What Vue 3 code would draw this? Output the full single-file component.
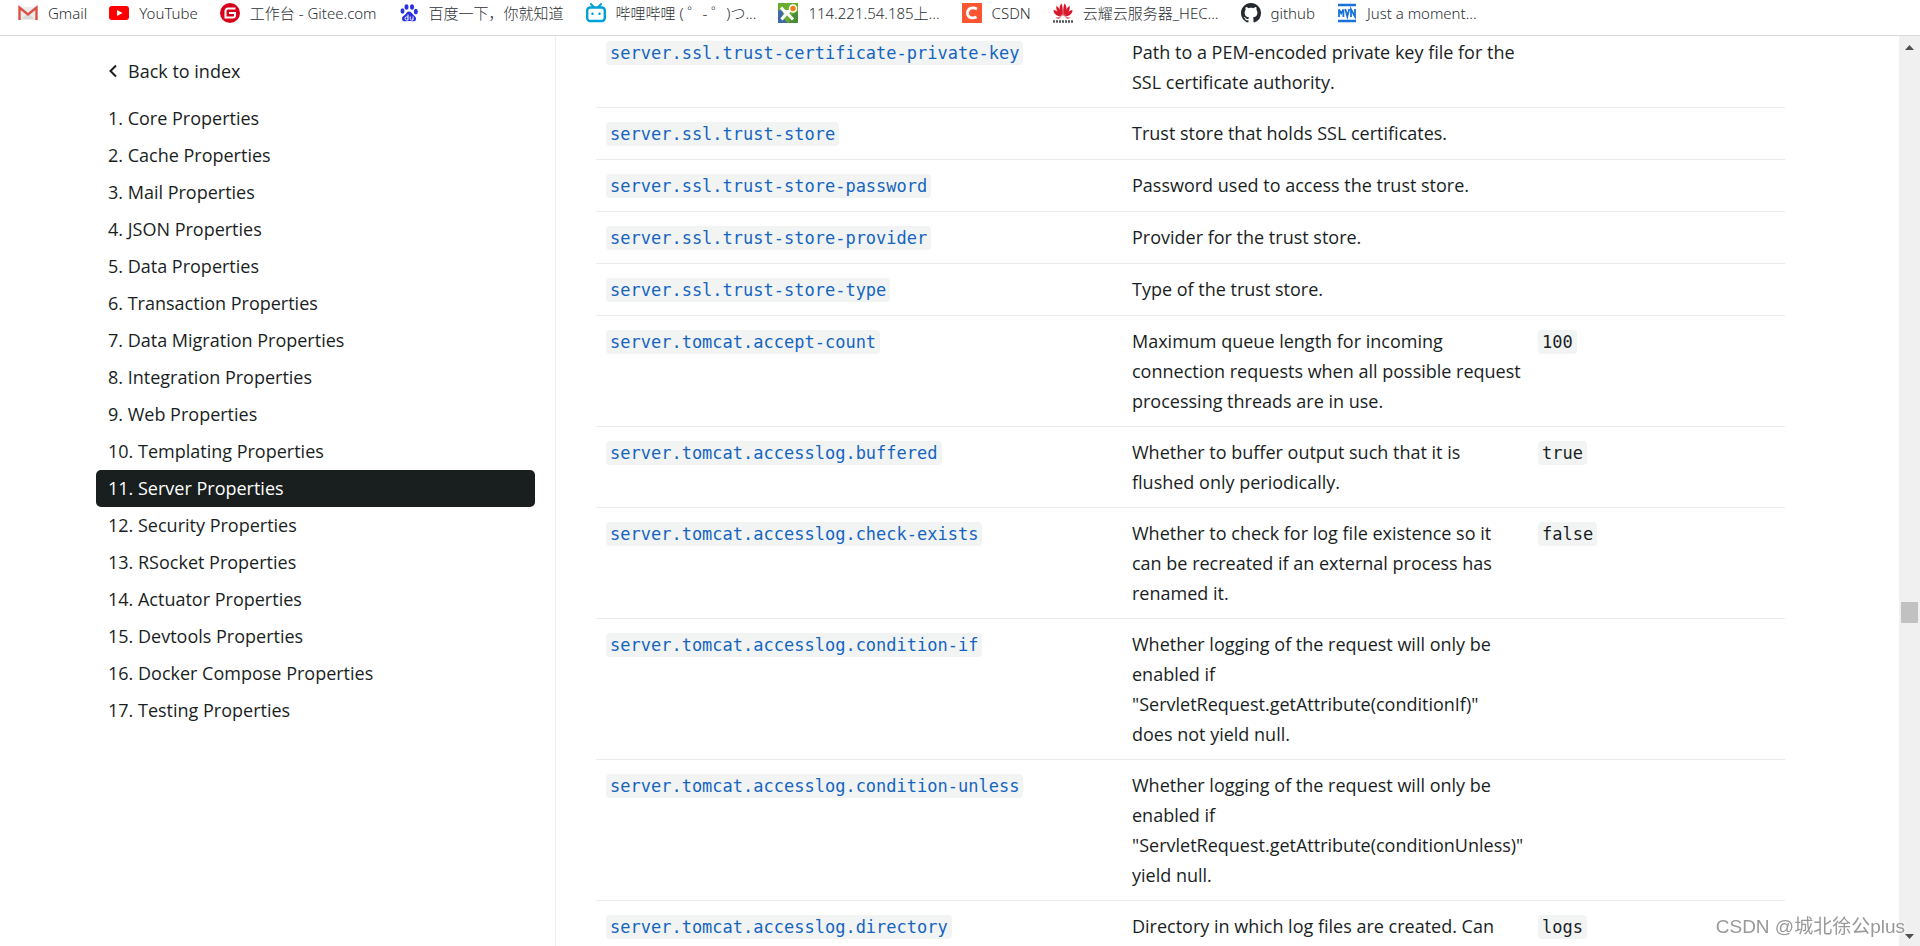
<!-- src/App.vue -->
<script setup>
import { ref } from 'vue';

// Bookmarks bar entries, the icon is picked by name in the template
const bookmarks = [
  { icon: 'gmail', label: 'Gmail' },
  { icon: 'youtube', label: 'YouTube' },
  { icon: 'gitee', label: '工作台 - Gitee.com' },
  { icon: 'baidu', label: '百度一下，你就知道' },
  { icon: 'bilibili', label: '哔哩哔哩 ( ゜- ゜)つ...' },
  { icon: 'server', label: '114.221.54.185上...' },
  { icon: 'csdn', label: 'CSDN' },
  { icon: 'huawei', label: '云耀云服务器_HEC...' },
  { icon: 'github', label: 'github' },
  { icon: 'mvn', label: 'Just a moment...' }
];

const sections = [
  'Core Properties',
  'Cache Properties',
  'Mail Properties',
  'JSON Properties',
  'Data Properties',
  'Transaction Properties',
  'Data Migration Properties',
  'Integration Properties',
  'Web Properties',
  'Templating Properties',
  'Server Properties',
  'Security Properties',
  'RSocket Properties',
  'Actuator Properties',
  'Devtools Properties',
  'Docker Compose Properties',
  'Testing Properties'
];

// Current section
const active = ref(10);

const properties = [
  { name: 'server.ssl.trust-certificate-private-key', text: 'Path to a PEM-encoded private key file for the SSL certificate authority.' },
  { name: 'server.ssl.trust-store', text: 'Trust store that holds SSL certificates.' },
  { name: 'server.ssl.trust-store-password', text: 'Password used to access the trust store.' },
  { name: 'server.ssl.trust-store-provider', text: 'Provider for the trust store.' },
  { name: 'server.ssl.trust-store-type', text: 'Type of the trust store.' },
  { name: 'server.tomcat.accept-count', text: 'Maximum queue length for incoming connection requests when all possible request processing threads are in use.', value: '100' },
  { name: 'server.tomcat.accesslog.buffered', text: 'Whether to buffer output such that it is flushed only periodically.', value: 'true' },
  { name: 'server.tomcat.accesslog.check-exists', text: 'Whether to check for log file existence so it can be recreated if an external process has renamed it.', value: 'false' },
  { name: 'server.tomcat.accesslog.condition-if', text: 'Whether logging of the request will only be enabled if "ServletRequest.getAttribute(conditionIf)" does not yield null.' },
  { name: 'server.tomcat.accesslog.condition-unless', text: 'Whether logging of the request will only be enabled if "ServletRequest.getAttribute(conditionUnless)" yield null.' },
  { name: 'server.tomcat.accesslog.directory', text: 'Directory in which log files are created. Can', value: 'logs' }
];
</script>

<template>
  <div class="window">
    <nav class="bookmarks" aria-label="Bookmarks">
      <a v-for="item in bookmarks" :key="item.icon" href="#" class="bookmark">
        <svg class="bookmark-icon" viewBox="0 0 20 20" aria-hidden="true">
          <g v-if="item.icon === 'gmail'">
            <path d="M2 4h16v13H2z" fill="#ececec" />
            <path d="M3 16l6-5h2l6 5z" fill="#d8d8d8" />
            <path d="M1.5 17V4.5L10 11.5l8.5-7V17" fill="none" stroke="#dd5145" stroke-width="2.4" />
          </g>
          <g v-else-if="item.icon === 'youtube'">
            <rect y="3" width="20" height="14" rx="3" fill="#f00" />
            <path d="M8 7l5.5 3L8 13z" fill="#fff" />
          </g>
          <g v-else-if="item.icon === 'gitee'">
            <circle cx="10" cy="10" r="10" fill="#d9001b" />
            <path d="M15.5 5.5H8A2.5 2.5 0 0 0 5.5 8v6.5H13a2 2 0 0 0 2-2V10H9" fill="none" stroke="#fff" stroke-width="2" />
          </g>
          <g v-else-if="item.icon === 'baidu'" fill="#2932e1">
            <ellipse cx="7.5" cy="4" rx="2" ry="2.8" />
            <ellipse cx="13" cy="4" rx="2" ry="2.8" />
            <ellipse cx="3.5" cy="8" rx="2" ry="2.7" />
            <ellipse cx="16.8" cy="8.5" rx="2" ry="2.7" />
            <path d="M10 8.5c2 0 3 2 4.500 3.500s3 2.500 2.500 4.500-2.500 2-4 1.700-4-.3-6 0S3 18.500 3 15.800s2-2.800 3.200-4.300S8 8.500 10 8.500z" />
            <path d="M9 11.5V17H7.500a1.500 1.500 0 0 1 0-3H9M11.200 13.500v2.300c0 1 .5 1.200 1.300 1.200H14v-3.500" fill="none" stroke="#fff" />
          </g>
          <g v-else-if="item.icon === 'bilibili'">
            <path d="M5 1l3 3.500M15 1l-3 3.500" stroke="#00a1d6" stroke-width="2" stroke-linecap="round" />
            <rect x="1.2" y="4.5" width="17.6" height="13.5" rx="3" fill="#fff" stroke="#00a1d6" stroke-width="2.4" />
            <path d="M6.500 9.500V12M13.500 9.500V12" stroke="#00a1d6" stroke-width="2" />
          </g>
          <g v-else-if="item.icon === 'server'">
            <path d="M0 0h20v20H0z" fill="#6aac2e" />
            <path d="M0 7c6 0 6 3 4 7l6 6H0z" fill="#3f69a8" />
            <path d="M13 12l7-3v11h-9z" fill="#4a8b35" />
            <circle cx="15" cy="5.5" r="3.5" fill="#ef7f1a" stroke="#fff" stroke-width="1.5" />
            <path d="M3 4.500l4 4.500 5-1M9 10l-5.500 6.500M9 10l6 6.500M7 9l4 2" fill="none" stroke="#fff" stroke-width="3" />
          </g>
          <g v-else-if="item.icon === 'csdn'">
            <path d="M0 0h20v20H0z" fill="#fc5531" />
            <path d="M15 6c-5-2.500-9-.5-9.500 3.500S9 16.500 14.500 14" fill="none" stroke="#fff" stroke-width="2.8" />
          </g>
          <g v-else-if="item.icon === 'huawei'">
            <g fill="#d8182d">
              <path d="M9.600 13C6 9 5.500 3 8.500.5 10 4 10 9 9.600 13z" />
              <path d="M10.400 13C14 9 14.500 3 11.500.5 10 4 10 9 10.400 13z" />
              <path d="M9 13C5 11 2.500 7 3.500 2.800 6.500 5 8.500 9 9 13z" />
              <path d="M11 13c4-2 6.500-6 5.500-10.200C13.500 5 11.500 9 11 13z" />
              <path d="M8.500 13.600C4 13.500.5 11 .5 7c3.500.5 7 3.500 8 6.600z" />
              <path d="M11.500 13.600c4.500-.1 8-2.600 8-6.600-3.500.5-7 3.500-8 6.600z" />
              <path d="M8 14.500H2.500C4 16 6.500 16 8 14.500zM12 14.500h5.500C16 16 13.500 16 12 14.500z" />
            </g>
            <path d="M0 18.500h20" stroke="#555" stroke-width="2.5" stroke-dasharray="2 1" />
          </g>
          <g v-else-if="item.icon === 'github'">
            <path
              transform="scale(1.25)"
              fill="#24292f"
              d="M8 0C3.580 0 0 3.580 0 8c0 3.540 2.290 6.530 5.470 7.590.4.070.55-.17.55-.38 0-.19-.01-.82-.01-1.490-2.010.37-2.530-.49-2.690-.94-.09-.23-.48-.94-.82-1.130-.28-.15-.68-.52-.01-.53.63-.01 1.080.58 1.230.82.72 1.210 1.870.87 2.330.66.070-.52.28-.87.51-1.070-1.780-.2-3.640-.89-3.640-3.950 0-.87.31-1.590.82-2.150-.08-.2-.36-1.020.08-2.120 0 0 .67-.21 2.200.82.64-.18 1.320-.27 2-.27s1.360.09 2 .27c1.530-1.040 2.200-.82 2.200-.82.44 1.100.16 1.920.08 2.120.51.56.82 1.270.82 2.150 0 3.070-1.870 3.750-3.650 3.950.29.25.54.73.54 1.480 0 1.070-.01 1.930-.01 2.200 0 .21.15.46.55.38A8.010 8.010 0 0 0 16 8c0-4.420-3.580-8-8-8z"
            />
          </g>
          <g v-else>
            <path d="M1 2h18M1 18h18" stroke="#1a73d9" stroke-width="2.5" />
            <path d="M2 14V6.500l2.200 4 2.200-4V14M8.300 6l2 7.500 2-7.500M14 14V6.500l4 7V6" fill="none" stroke="#1a73d9" stroke-width="1.8" />
          </g>
        </svg>
        <span>{{ item.label }}</span>
      </a>
    </nav>

    <div class="page">
      <aside class="sidebar">
        <a href="#" class="back">
          <svg class="chevron" viewBox="0 0 10 14" aria-hidden="true">
            <path d="M8 1.500L2.500 7 8 12.500" fill="none" stroke="#191e1e" stroke-width="2" />
          </svg>
          Back to index
        </a>
        <nav aria-label="Table of contents">
          <a
            v-for="(title, index) in sections"
            :key="title"
            href="#"
            :class="['toc-link', { 'toc-link-active': active === index }]"
            @click.prevent="active = index"
          >{{ index + 1 }}. {{ title }}</a>
        </nav>
      </aside>

      <main class="content">
        <table class="properties">
          <colgroup>
            <col class="col-name" />
            <col class="col-text" />
            <col />
          </colgroup>
          <tbody>
            <tr v-for="row in properties" :key="row.name">
              <td><a href="#" class="property-link"><code>{{ row.name }}</code></a></td>
              <td>{{ row.text }}</td>
              <td><code v-if="row.value">{{ row.value }}</code></td>
            </tr>
          </tbody>
        </table>
      </main>

      <div class="scrollbar" aria-hidden="true">
        <svg class="arrow" viewBox="0 0 9 5"><path d="M0 5L4.500 0 9 5z" fill="#505050" /></svg>
        <div class="track">
          <div class="track-before"></div>
          <div class="thumb"></div>
          <div class="track-after"></div>
        </div>
        <svg class="arrow" viewBox="0 0 9 5"><path d="M0 0l4.500 5L9 0z" fill="#505050" /></svg>
      </div>
    </div>

    <div class="watermark">CSDN @城北徐公plus</div>
  </div>
</template>

<style>
body {
  margin: 0;
  background-color: #fff;
}
</style>

<style scoped>
.window {
  display: flex;
  flex-direction: column;
  height: 100vh;
  overflow: hidden;
  color: #191e1e;
  font-family: "Open Sans", "Noto Sans CJK SC", sans-serif;
  font-size: 18px;
  line-height: 30px;
}

a {
  color: inherit;
  text-decoration: none;
}

/* Bookmarks bar */
.bookmarks {
  display: flex;
  flex-shrink: 0;
  gap: 22px;
  height: 32px;
  padding: 3px 18px 0;
  border-bottom: 1px solid #dadada;
  color: #2c3034;
  font-family: "Noto Sans", "Noto Sans CJK SC", sans-serif;
  font-size: 15px;
  font-weight: 300;
  line-height: 20px;
  white-space: nowrap;
}

.bookmark {
  display: flex;
  gap: 10px;
  height: 20px;
}

.bookmark-icon {
  width: 20px;
  height: 20px;
}

.page {
  display: flex;
  flex: 1;
  min-height: 0;
}

/* Table of contents */
.sidebar {
  box-sizing: border-box;
  width: 556px;
  flex-shrink: 0;
  padding: 20px 20px 0 96px;
  border-right: 1px solid #ebeeee;
}

.back {
  display: flex;
  align-items: center;
  gap: 10px;
  margin-bottom: 14px;
  padding-left: 12px;
}

.chevron {
  width: 10px;
  height: 14px;
}

.toc-link {
  display: block;
  padding: 0 12px;
  border-radius: 5px;
  line-height: 37px;
}

.toc-link-active {
  background-color: #191e1e;
  color: #fff;
}

/* Property table */
.content {
  flex: 1;
  min-width: 0;
  overflow: hidden;
  padding: 0 114px 0 40px;
}

/* Scrolled a little, the first row starts under the bookmarks bar */
.properties {
  width: 100%;
  margin-top: -9px;
  border-spacing: 0;
  table-layout: fixed;
}

.col-name {
  width: 526px;
}

.col-text {
  width: 406px;
}

.properties td {
  box-sizing: border-box;
  height: 52px;
  padding: 10px 6px 10px 10px;
  border-bottom: 1px solid #ebebeb;
  vertical-align: top;
}

code {
  display: inline-block;
  padding: 0 4px;
  border-radius: 4px;
  background-color: #f2f4f4;
  font-family: "DejaVu Sans Mono", monospace;
  font-size: 17px;
  line-height: 24px;
}

.property-link {
  color: #1565c0;
}

/* Scrollbar */
.scrollbar {
  display: flex;
  flex-direction: column;
  align-items: center;
  width: 21px;
  padding: 9px 0 7px;
  box-sizing: border-box;
  background-color: #f0f0f0;
}

.arrow {
  width: 9px;
  height: 5px;
}

.track {
  display: flex;
  flex: 1;
  flex-direction: column;
}

.track-before {
  flex: 551;
}

.track-after {
  flex: 311;
}

.thumb {
  width: 17px;
  height: 21px;
  background-color: #c1c1c1;
}

.watermark {
  position: fixed;
  right: 15px;
  bottom: 4px;
  color: #999;
  font-family: "Liberation Sans", "Noto Sans CJK SC", sans-serif;
  font-size: 19px;
  text-shadow: 1px 1px 1px #fff;
}
</style>
